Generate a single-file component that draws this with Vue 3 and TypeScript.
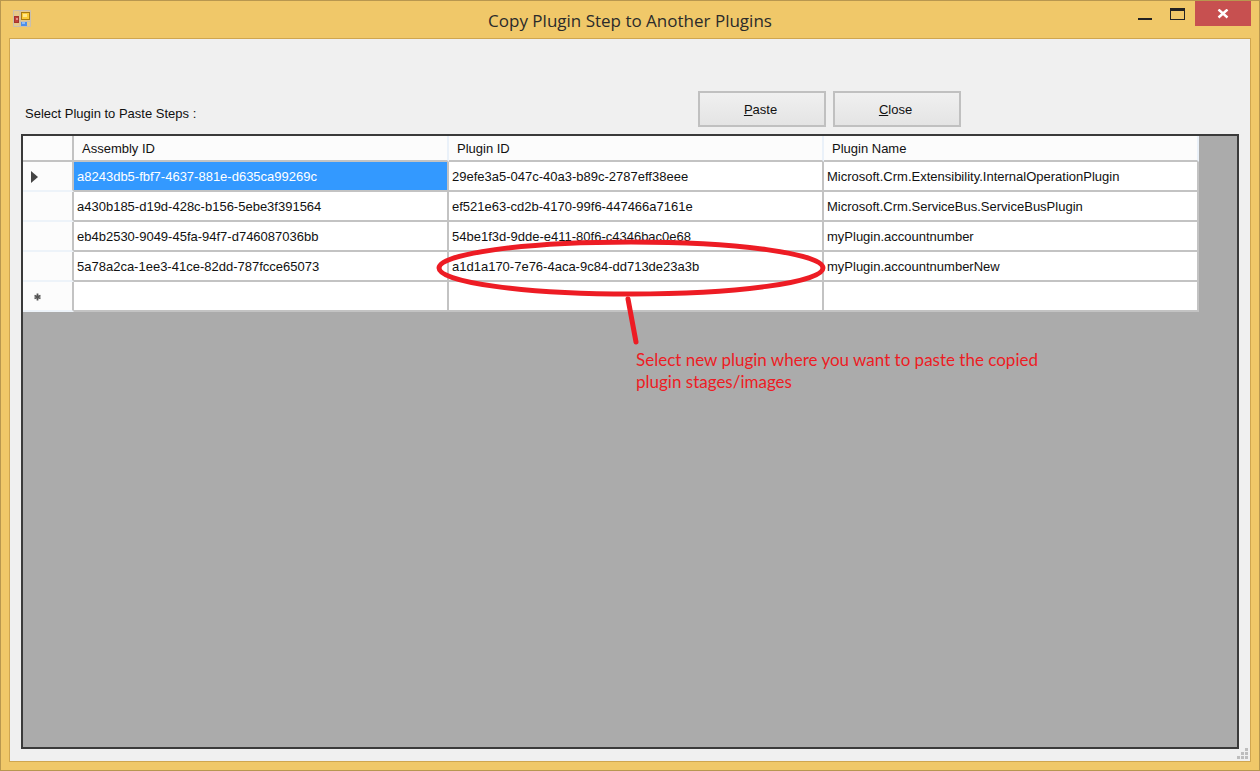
<script setup lang="ts">
import { ref } from 'vue'

interface PluginRow {
  assemblyId: string
  pluginId: string
  name: string
}

const rows: PluginRow[] = [
  { assemblyId: 'a8243db5-fbf7-4637-881e-d635ca99269c', pluginId: '29efe3a5-047c-40a3-b89c-2787eff38eee', name: 'Microsoft.Crm.Extensibility.InternalOperationPlugin' },
  { assemblyId: 'a430b185-d19d-428c-b156-5ebe3f391564', pluginId: 'ef521e63-cd2b-4170-99f6-447466a7161e', name: 'Microsoft.Crm.ServiceBus.ServiceBusPlugin' },
  { assemblyId: 'eb4b2530-9049-45fa-94f7-d746087036bb', pluginId: '54be1f3d-9dde-e411-80f6-c4346bac0e68', name: 'myPlugin.accountnumber' },
  { assemblyId: '5a78a2ca-1ee3-41ce-82dd-787fcce65073', pluginId: 'a1d1a170-7e76-4aca-9c84-dd713de23a3b', name: 'myPlugin.accountnumberNew' },
]

const current = ref(0)
</script>

<template>
  <div class="window">
    <header class="titlebar">
      <svg class="app-icon" width="18" height="18" viewBox="0 0 18 18" aria-hidden="true">
        <path d="M.5 .5h17v16H.5z" fill="#e6c98a" stroke="#c9bfae" />
        <path d="M1 11.500h16M7 1v16" stroke="#c9bfae" />
        <rect x="1.500" y="6.500" width="4" height="6" fill="#c2423a" stroke="#a5352c" />
        <rect x="3" y="8" width="2" height="2" fill="#e89088" />
        <rect x="8.500" y="2.500" width="8" height="7" fill="#fbcb35" stroke="#a87b10" />
        <rect x="10" y="4" width="4" height="3" fill="#ffe88a" />
        <rect x="8" y="12" width="6" height="4" fill="#4e8fe8" />
        <rect x="9" y="12" width="3" height="2" fill="#8fbcf8" />
      </svg>
      <h1>Copy Plugin Step to Another Plugins</h1>
      <div class="controls">
        <button type="button" class="ctl" aria-label="Minimize">
          <svg width="14" height="12" viewBox="0 0 14 12"><path d="M0 10h14v2H0z" fill="#222" /></svg>
        </button>
        <button type="button" class="ctl" aria-label="Maximize">
          <svg width="15" height="12" viewBox="0 0 15 12"><path d="M0 0h15v12H0zM1 3v8h13V3z" fill="#222" fill-rule="evenodd" /></svg>
        </button>
        <button type="button" class="ctl close" aria-label="Close window">
          <svg width="12" height="10" viewBox="0 0 12 10"><path d="M1.500 .5l9 8M10.500 .5l-9 8" stroke="#fff" stroke-width="2.400" /></svg>
        </button>
      </div>
    </header>

    <main class="client">
      <div class="toolbar">
        <span id="grid-label" class="label">Select Plugin to Paste Steps :</span>
        <div class="actions">
          <button type="button" class="btn" accesskey="p"><u>P</u>aste</button>
          <button type="button" class="btn" accesskey="c"><u>C</u>lose</button>
        </div>
      </div>

      <div class="grid">
        <table aria-labelledby="grid-label">
          <colgroup>
            <col class="col-head" />
            <col class="col-data" />
            <col class="col-data" />
            <col class="col-data" />
          </colgroup>
          <thead>
            <tr>
              <th></th>
              <th scope="col">Assembly ID</th>
              <th scope="col">Plugin ID</th>
              <th scope="col">Plugin Name</th>
            </tr>
          </thead>
          <tbody>
            <tr v-for="(row, i) in rows" :key="row.pluginId" @click="current = i">
              <th class="row-head">
                <svg v-if="i === current" width="7" height="12" viewBox="0 0 7 12"><path d="M0 0l7 6-7 6z" fill="#444" /></svg>
              </th>
              <td :class="{ selected: i === current }">{{ row.assemblyId }}</td>
              <td>{{ row.pluginId }}</td>
              <td>{{ row.name }}</td>
            </tr>
            <tr>
              <th class="row-head new">
                <svg width="7" height="8" viewBox="0 0 7 8"><path d="M3.500 .5v7M.5 2.500l6 3M6.500 2.500l-6 3" stroke="#555" stroke-width="1.800" /></svg>
              </th>
              <td></td>
              <td></td>
              <td></td>
            </tr>
          </tbody>
        </table>

        <svg class="mark" width="392" height="112" viewBox="0 0 392 112" fill="none" stroke="#ed1c24" stroke-width="5" aria-hidden="true">
          <ellipse cx="195" cy="31" rx="192" ry="26" />
          <path d="M192 62l8 43" stroke-linecap="round" />
        </svg>
        <p class="note">Select new plugin where you want to paste the copied plugin stages/images</p>
      </div>

      <svg class="grip" width="11" height="11" viewBox="0 0 11 11" fill="#bdbdbd" aria-hidden="true">
        <path d="M8 0h3v3H8zM4 4h3v3H4zM8 4h3v3H8zM0 8h3v3H0zM4 8h3v3H4zM8 8h3v3H8z" />
      </svg>
    </main>
  </div>
</template>

<style>
body {
  margin: 0;
}
</style>

<style scoped>
* {
  box-sizing: border-box;
}

.window {
  display: flex;
  flex-direction: column;
  height: 100vh;
  padding: 0 8px 8px;
  border: 1px solid #b8974f;
  background: #f0c869;
  color: #111;
  font: 13px/18px "Liberation Sans", Arial, sans-serif;
}

.titlebar {
  display: grid;
  grid-template-columns: 1fr auto 1fr;
  height: 37px;
}

.app-icon {
  margin: 9px 0 0 4px;
}

h1 {
  margin: 8px 0 0;
  color: #2b2b2b;
  font: 400 17px/24px "Open Sans", "Noto Sans", sans-serif;
}

.controls {
  display: flex;
  justify-content: flex-end;
  height: 25px;
}

.ctl {
  display: flex;
  align-items: center;
  justify-content: center;
  width: 32px;
  padding: 0;
  border: 0;
  background: none;
}

.ctl.close {
  width: 56px;
  margin-left: 2px;
  background: #c75050;
}

.client {
  position: relative;
  display: flex;
  flex: 1;
  flex-direction: column;
  min-height: 0;
  padding: 52px 11px 12px;
  border: 1px solid #cfa650;
  background: #f0f0f0;
}

.toolbar {
  display: flex;
  height: 43px;
}

.label {
  width: 677px;
  padding: 14px 0 0 4px;
}

.actions {
  display: flex;
  gap: 7px;
}

.btn {
  width: 128px;
  height: 36px;
  padding: 1px 3px 0 0;
  border: 2px solid #c0c0c0;
  background: linear-gradient(#f0f0f0, #e4e4e4);
  color: #111;
  font: inherit;
}

.grid {
  position: relative;
  flex: 1;
  border: 2px solid #3a3a3a;
  background: #ababab;
}

table {
  width: 1176px;
  border-collapse: separate;
  border-spacing: 0;
  table-layout: fixed;
}

.col-head {
  width: 51px;
}

.col-data {
  width: 375px;
}

th,
td {
  height: 30px;
  padding: 1px 3px 0;
  border-right: 2px solid #c3c3c3;
  border-bottom: 2px solid #c3c3c3;
  background: #fff;
  font-weight: 400;
  text-align: left;
}

thead th {
  height: 26px;
  padding: 1px 8px 0;
  border-right-color: #eaf1f9;
  background: #fcfcfc;
}

thead th:first-child {
  border-right-color: #c3c3c3;
}

.row-head {
  padding-left: 8px;
  border-bottom-color: #edf3f9;
  background: #fcfcfc;
}

.row-head.new {
  padding-left: 11px;
}

.row-head svg {
  display: block;
}

td.selected {
  background: #3399ff;
  color: #fff;
}

.mark {
  position: absolute;
  top: 101px;
  left: 413px;
  pointer-events: none;
}

.note {
  position: absolute;
  top: 213px;
  left: 613px;
  width: 420px;
  margin: 0;
  color: #ed1c24;
  font: 17px/22px Lato, sans-serif;
}

.grip {
  position: absolute;
  right: 2px;
  bottom: 2px;
}
</style>
